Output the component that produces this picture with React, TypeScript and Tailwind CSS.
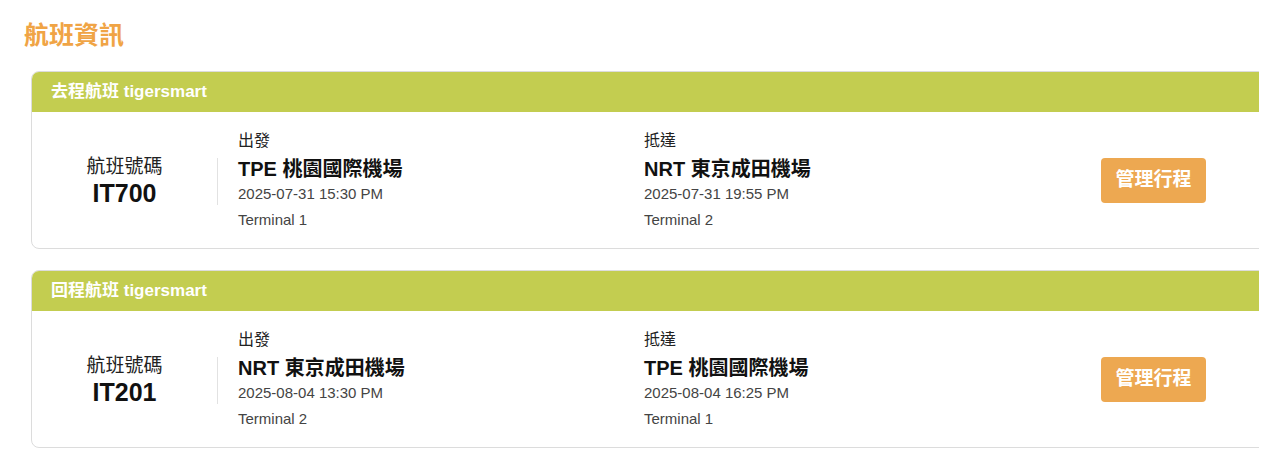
import React from "react";

type Place = {
  label: string;
  airport: string;
  time: string;
  terminal: string;
};

type Flight = {
  title: string;
  number: string;
  depart: Place;
  arrive: Place;
};

const flights: Flight[] = [
  {
    title: "去程航班 tigersmart",
    number: "IT700",
    depart: { label: "出發", airport: "TPE 桃園國際機場", time: "2025-07-31 15:30 PM", terminal: "Terminal 1" },
    arrive: { label: "抵達", airport: "NRT 東京成田機場", time: "2025-07-31 19:55 PM", terminal: "Terminal 2" },
  },
  {
    title: "回程航班 tigersmart",
    number: "IT201",
    depart: { label: "出發", airport: "NRT 東京成田機場", time: "2025-08-04 13:30 PM", terminal: "Terminal 2" },
    arrive: { label: "抵達", airport: "TPE 桃園國際機場", time: "2025-08-04 16:25 PM", terminal: "Terminal 1" },
  },
];

function PlaceColumn({ place }: { place: Place }) {
  return (
    <div className="flex flex-col">
      <div className="text-[16px] leading-[20px] text-[#222]">{place.label}</div>
      <div className="mt-[7px] text-[20px] leading-[22px] font-bold text-[#111]">{place.airport}</div>
      <div className="mt-[5px] text-[15px] leading-[18px] text-[#444]">{place.time}</div>
      <div className="mt-[8px] text-[15px] leading-[18px] text-[#444]">{place.terminal}</div>
    </div>
  );
}

function FlightCard({ flight }: { flight: Flight }) {
  return (
    <div className="w-[1240px] rounded-[8px] border border-[#dcdcdc] overflow-hidden bg-white">
      <div className="h-[40px] bg-[#c3cd50] flex items-center pl-[19px] text-white font-bold text-[17px]">
        {flight.title}
      </div>
      <div className="h-[136px] flex items-center">
        <div className="w-[185px] flex flex-col items-center pt-[2px]">
          <div className="text-[19px] leading-[24px] text-[#222]">航班號碼</div>
          <div className="text-[25px] leading-[28px] font-bold text-[#111]">{flight.number}</div>
        </div>
        <div className="w-px h-[47px] bg-[#e2e2e2] mt-[2px]" />
        <div className="ml-[20px] w-[406px]">
          <PlaceColumn place={flight.depart} />
        </div>
        <div className="w-[457px]">
          <PlaceColumn place={flight.arrive} />
        </div>
        <button className="w-[105px] h-[45px] rounded-[4px] bg-[#eda851] text-white font-bold text-[19px] mt-[1px]">
          管理行程
        </button>
      </div>
    </div>
  );
}

export default function App() {
  return (
    <div
      className="w-[1280px] h-[466px] bg-white overflow-hidden"
      style={{ fontFamily: '"Liberation Sans", Arial, "Noto Sans CJK TC", sans-serif' }}
    >
      <h1 className="pl-[24px] pt-[20px] text-[25px] leading-[30px] font-bold text-[#f0a445]">航班資訊</h1>
      <div className="ml-[31px] mt-[21px] w-[1228px] overflow-hidden flex flex-col gap-[21px]">
        {flights.map((f) => (
          <FlightCard key={f.number} flight={f} />
        ))}
      </div>
    </div>
  );
}
